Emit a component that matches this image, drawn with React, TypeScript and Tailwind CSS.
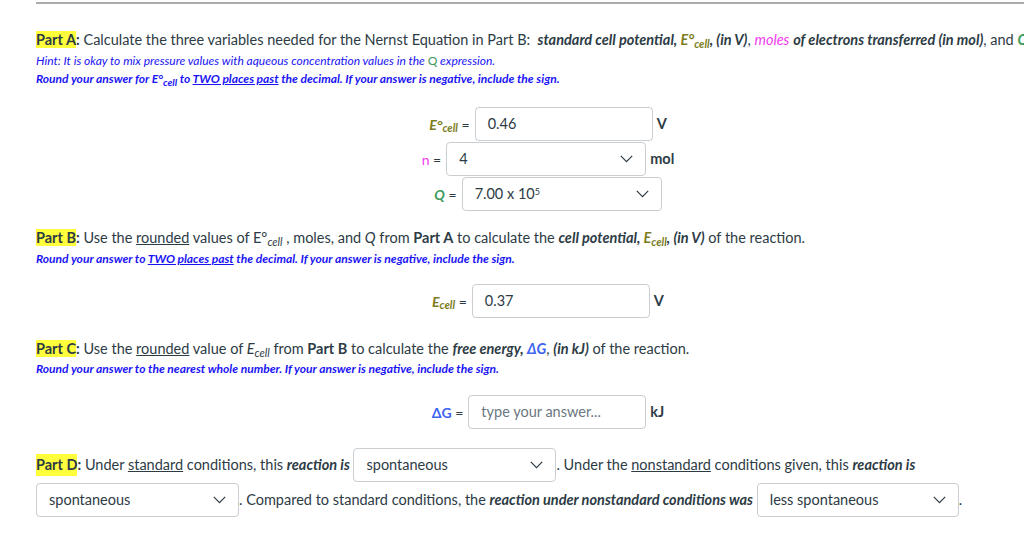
import type { ReactNode } from 'react'

const olive = 'text-[#7d7d1e]'
const pink = 'text-[#f23cf0]'
const green = 'text-[#3c9a5a]'
const blue = 'text-[#3d63f0]'

function Tag({ children }: { children: ReactNode }) {
  return (
    <>
      <span className="bg-[#ffff3c] font-bold">{children}</span>
      <span className="font-bold">:</span>
    </>
  )
}

function Chevron() {
  return (
    <svg width="13" height="8" viewBox="0 0 13 8" fill="none" className="text-[#2d3b45]">
      <polyline points="0.8,0.8 6.5,6.6 12.2,0.8" stroke="currentColor" strokeWidth="1.2" />
    </svg>
  )
}

function Field({ value, placeholder, w }: { value?: string; placeholder?: string; w: string }) {
  return (
    <div className={`${w} h-[34px] flex items-center px-3 border border-[#c9ced3] rounded-[4px] bg-white text-[14.5px]`}>
      {value ? <span className="text-[#2d3b45]">{value}</span> : <span className="text-[#6b7780]">{placeholder}</span>}
    </div>
  )
}

function Select({ children, w }: { children: ReactNode; w: string }) {
  return (
    <div className={`${w} h-[34px] flex items-center justify-between pl-3 pr-[12px] border border-[#c9ced3] rounded-[4px] bg-white text-[14.5px] text-[#2d3b45] shrink-0`}>
      <span>{children}</span>
      <Chevron />
    </div>
  )
}

function Row({ children }: { children: ReactNode }) {
  return <div className="w-[1024px] flex justify-center items-center gap-[3px] h-[34px]">{children}</div>
}

export default function App() {
  return (
    <div className="w-[1024px] h-[554px] overflow-hidden bg-white font-['Lato',sans-serif] text-[#2d3b45]">
      <div className="pl-[36px] pt-[2px]">
        <div className="border-t-2 border-[#ababab]" />

        <div className="w-[1024px] whitespace-nowrap">
          <p className="mt-[26px] text-[14.5px] leading-[20px]">
            <Tag>Part A</Tag> Calculate the three variables needed for the Nernst Equation in Part B:&nbsp;{' '}
            <b><i>standard cell potential, </i></b>
            <b className={`italic ${olive}`}>E°<sub className="text-[11px]">cell</sub></b>
            <b><i>, (in V)</i></b>, <i className={pink}>moles</i> <b><i>of electrons transferred (in mol)</i></b>, and{' '}
            <b className={`italic ${green}`}>Q</b>
          </p>
          <p className="mt-[2px] text-[12px] leading-[18px] italic text-[#1a14f5]">
            Hint: It is okay to mix pressure values with aqueous concentration values in the <span className={`not-italic ${green}`}>Q</span> expression.
          </p>
          <p className="text-[12px] leading-[18px] italic font-bold text-[#1a14f5]">
            Round your answer for E°<sub className="text-[10px]">cell</sub> to <u>TWO places past</u> the decimal. If your answer is negative, include the sign.
          </p>
        </div>

        <div className="mt-[19px] flex flex-col gap-[1px] text-[14px]">
          <Row>
            <span className="mr-[2px]">
              <b className={`italic ${olive}`}>E°<sub className="text-[11px]">cell</sub></b> =
            </span>
            <Field value="0.46" w="w-[178px]" />
            <b className="ml-[1px] text-[14.5px] self-start mt-[6px]">V</b>
          </Row>
          <Row>
            <span className="mr-[2px]">
              <span className={pink}>n</span> =
            </span>
            <Select w="w-[200px]">4</Select>
            <b className="ml-[1px] text-[14.5px]">mol</b>
          </Row>
          <Row>
            <span className="mr-[2px]">
              <b className={`italic ${green}`}>Q</b> =
            </span>
            <Select w="w-[200px]">
              7.00 x 10<sup className="text-[9px]">5</sup>
            </Select>
          </Row>
        </div>

        <div className="w-[1024px] whitespace-nowrap">
          <p className="mt-[17px] text-[14.5px] leading-[20px]">
            <Tag>Part B</Tag> Use the <u>rounded</u> values of E°<sub className="text-[11px] italic">cell</sub> , moles, and <i>Q</i> from <b>Part A</b> to calculate the{' '}
            <b><i>cell potential, </i></b>
            <b className={`italic ${olive}`}>E<sub className="text-[11px]">cell</sub></b>
            <b><i>, (in V)</i></b> of the reaction.
          </p>
          <p className="mt-[2px] text-[12px] leading-[18px] italic font-bold text-[#1a14f5]">
            Round your answer to <u>TWO places past</u> the decimal. If your answer is negative, include the sign.
          </p>
        </div>

        <div className="mt-[16px] text-[14px]">
          <Row>
            <span className="mr-[2px]">
              <b className={`italic ${olive}`}>E<sub className="text-[11px]">cell</sub></b> =
            </span>
            <Field value="0.37" w="w-[178px]" />
            <b className="ml-[1px] text-[14.5px] self-start mt-[6px]">V</b>
          </Row>
        </div>

        <div className="w-[1024px] whitespace-nowrap">
          <p className="mt-[21px] text-[14.5px] leading-[20px]">
            <Tag>Part C</Tag> Use the <u>rounded</u> value of <i>E<sub className="text-[11px]">cell</sub></i> from <b>Part B</b> to calculate the{' '}
            <b><i>free energy, </i></b>
            <b className={`italic ${blue}`}>ΔG</b>, <b><i>(in kJ)</i></b> of the reaction.
          </p>
          <p className="mt-[1px] text-[12px] leading-[18px] italic font-bold text-[#1a14f5]">
            Round your answer to the nearest whole number. If your answer is negative, include the sign.
          </p>
        </div>

        <div className="mt-[17px] text-[14px]">
          <Row>
            <span className="mr-[2px]">
              <b className={blue}>ΔG</b> =
            </span>
            <Field placeholder="type your answer..." w="w-[178px]" />
            <b className="ml-[1px] text-[14.5px]">kJ</b>
          </Row>
        </div>

        <div className="mt-[19px] text-[14.5px] whitespace-nowrap flex flex-col gap-[1px]">
          <div className="flex items-center h-[34px]">
            <Tag>Part D</Tag>&nbsp;Under&nbsp;<u>standard</u>&nbsp;conditions, this&nbsp;<b><i>reaction is</i></b>&nbsp;
            <Select w="w-[203px]">spontaneous</Select>
            <span>. Under the&nbsp;<u>nonstandard</u> conditions given, this <b><i>reaction is</i></b></span>
          </div>
          <div className="flex items-center h-[34px]">
            <Select w="w-[203px]">spontaneous</Select>
            <span>. Compared to standard conditions, the <b><i>reaction under nonstandard conditions was</i></b>&nbsp;</span>
            <Select w="w-[202px]">less spontaneous</Select>
            <span>.</span>
          </div>
        </div>
      </div>
    </div>
  )
}
